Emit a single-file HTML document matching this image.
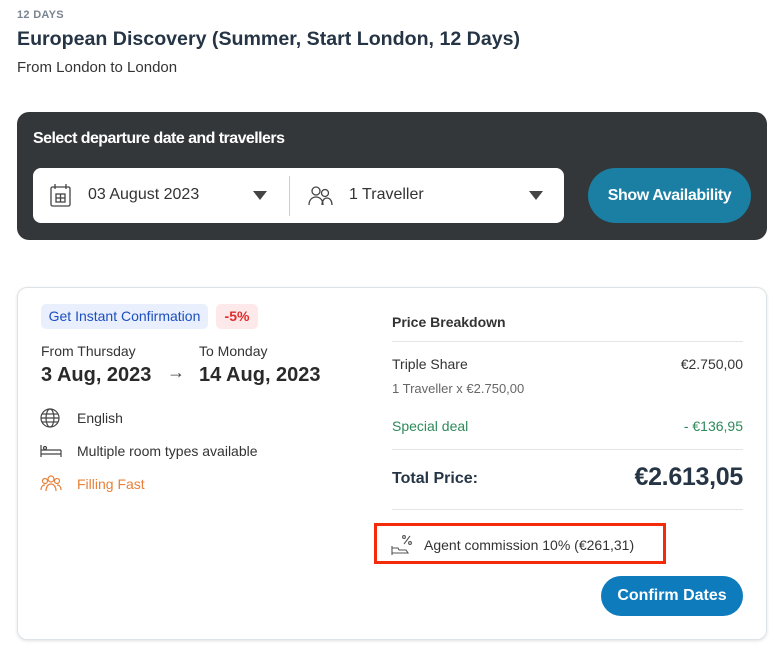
<!DOCTYPE html>
<html><head><meta charset="utf-8"><style>
*{margin:0;padding:0;box-sizing:border-box}
body{width:781px;height:651px;background:#fff;font-family:"Liberation Sans",Arial,sans-serif;position:relative;overflow:hidden;color:#333}
.a{position:absolute;white-space:nowrap}
</style></head><body>
<div class="a" style="left:17px;top:9px;font-size:11px;font-weight:bold;color:#7b8491;letter-spacing:0.3px">12 DAYS</div>
<div class="a" style="left:17px;top:28px;font-size:19.6px;font-weight:bold;color:#263545">European Discovery (Summer, Start London, 12 Days)</div>
<div class="a" style="left:17px;top:59px;font-size:15px;color:#333">From London to London</div>

<div class="a" style="left:17px;top:112px;width:750px;height:128px;background:#333739;border-radius:12px"></div>
<div class="a" style="left:33px;top:130px;font-size:16px;font-weight:bold;color:#fff;letter-spacing:-0.55px">Select departure date and travellers</div>
<div class="a" style="left:33px;top:168px;width:531px;height:55px;background:#fff;border-radius:8px"></div>
<div class="a" style="left:289px;top:176px;width:1px;height:40px;background:#ccc"></div>
<svg class="a" style="left:48px;top:183px" width="26" height="26" viewBox="0 0 26 26" fill="none" stroke="#444" stroke-width="1.3"><rect x="3" y="4" width="19" height="19" rx="1.5"/><line x1="7" y1="1" x2="7" y2="6"/><line x1="18" y1="1" x2="18" y2="6"/><rect x="8" y="11" width="9" height="8"/><line x1="12.5" y1="11" x2="12.5" y2="19"/><line x1="8" y1="15" x2="17" y2="15"/></svg>
<div class="a" style="left:88px;top:186px;font-size:16px;color:#333">03 August 2023</div>
<div class="a" style="left:253px;top:191px;width:0;height:0;border-left:7px solid transparent;border-right:7px solid transparent;border-top:9px solid #444"></div>
<svg class="a" style="left:308px;top:184px" width="26" height="24" viewBox="0 0 26 24" fill="none" stroke="#444" stroke-width="1.3"><circle cx="8" cy="7" r="4"/><path d="M1 21c0-5 3-8 7-8s7 3 7 8"/><circle cx="17" cy="9" r="3.5"/><path d="M14 21c0-4 2-7 5-7s5 3 5 7"/></svg>
<div class="a" style="left:349px;top:186px;font-size:16px;color:#333">1 Traveller</div>
<div class="a" style="left:529px;top:191px;width:0;height:0;border-left:7px solid transparent;border-right:7px solid transparent;border-top:9px solid #444"></div>
<div class="a" style="left:588px;top:168px;width:163px;height:55px;background:#1a7fa3;border-radius:28px;color:#fff;font-size:16px;font-weight:bold;text-align:center;line-height:55px;letter-spacing:-0.4px">Show Availability</div>

<div class="a" style="left:17px;top:287px;width:750px;height:353px;border:1px solid #dde3e6;border-radius:10px;box-shadow:0 1px 3px rgba(0,0,0,0.12)"></div>
<div class="a" style="left:41px;top:304px;width:167px;height:25px;background:#e9effc;border-radius:5px;color:#1c4fbf;font-size:14px;line-height:25px;text-align:center">Get Instant Confirmation</div>
<div class="a" style="left:216px;top:304px;width:42px;height:25px;background:#fde9ea;border-radius:5px;color:#e02c2c;font-size:14px;font-weight:bold;line-height:25px;text-align:center">-5%</div>
<div class="a" style="left:41px;top:343px;font-size:14px;color:#333">From Thursday</div>
<div class="a" style="left:199px;top:343px;font-size:14px;color:#333">To Monday</div>
<div class="a" style="left:41px;top:364px;font-size:20px;font-weight:bold;color:#2a2a2a">3 Aug, 2023</div>
<div class="a" style="left:167px;top:362px;font-size:18px;color:#444">→</div>
<div class="a" style="left:199px;top:364px;font-size:20px;font-weight:bold;color:#2a2a2a">14 Aug, 2023</div>
<svg class="a" style="left:40px;top:408px" width="22" height="22" viewBox="0 0 22 22" fill="none" stroke="#444" stroke-width="1.2"><circle cx="10" cy="10" r="9"/><ellipse cx="10" cy="10" rx="4" ry="9"/><line x1="1" y1="10" x2="19" y2="10"/><line x1="2" y1="6" x2="18" y2="6"/><line x1="2" y1="14" x2="18" y2="14"/></svg>
<div class="a" style="left:77px;top:410px;font-size:14px;color:#333">English</div>
<svg class="a" style="left:40px;top:444px" width="22" height="14" viewBox="0 0 22 14" fill="none" stroke="#444" stroke-width="1.2"><path d="M1 1v12M21 6v7M1 10h20M1 6h20"/><circle cx="5" cy="4" r="1.5"/></svg>
<div class="a" style="left:77px;top:443px;font-size:14px;color:#333">Multiple room types available</div>
<svg class="a" style="left:40px;top:474px" width="22" height="18" viewBox="0 0 22 18" fill="none" stroke="#e8803a" stroke-width="1.2"><circle cx="11" cy="5" r="3"/><circle cx="5" cy="7" r="2.5"/><circle cx="17" cy="7" r="2.5"/><path d="M6 17c0-4 2-7 5-7s5 3 5 7M1 16c0-3 1.5-5 4-5M21 16c0-3-1.5-5-4-5"/></svg>
<div class="a" style="left:77px;top:476px;font-size:14px;color:#e8803a">Filling Fast</div>

<div class="a" style="left:392px;top:314px;font-size:14px;font-weight:bold;color:#333">Price Breakdown</div>
<div class="a" style="left:392px;top:341px;width:351px;height:1px;background:#e2e5e8"></div>
<div class="a" style="left:392px;top:356px;font-size:14px;color:#333">Triple Share</div>
<div class="a" style="left:743px;top:356px;font-size:14px;color:#333;transform:translateX(-100%)">€2.750,00</div>
<div class="a" style="left:392px;top:381px;font-size:13px;color:#666">1 Traveller x €2.750,00</div>
<div class="a" style="left:392px;top:418px;font-size:14px;color:#2d8a5b">Special deal</div>
<div class="a" style="left:743px;top:418px;font-size:14px;color:#2d8a5b;transform:translateX(-100%)">- €136,95</div>
<div class="a" style="left:392px;top:449px;width:351px;height:1px;background:#e2e5e8"></div>
<div class="a" style="left:392px;top:470px;font-size:16px;font-weight:bold;color:#263545">Total Price:</div>
<div class="a" style="left:743px;top:463px;font-size:25px;font-weight:bold;color:#263545;transform:translateX(-100%);letter-spacing:-0.3px">€2.613,05</div>
<div class="a" style="left:392px;top:509px;width:351px;height:1px;background:#e2e5e8"></div>

<div class="a" style="left:374px;top:523px;width:292px;height:41px;border:3px solid #f52a0a"></div>
<svg class="a" style="left:391px;top:534px" width="22" height="22" viewBox="0 0 22 22" fill="none" stroke="#555" stroke-width="1.1"><path d="M1 12v9M1 19h16l-2-3H8l-1-2H1"/><circle cx="13" cy="3" r="1.4"/><circle cx="19" cy="9" r="1.4"/><line x1="19" y1="2" x2="13" y2="10"/></svg>
<div class="a" style="left:424px;top:537px;font-size:14px;color:#333">Agent commission 10% (€261,31)</div>
<div class="a" style="left:601px;top:576px;width:142px;height:40px;background:#0e7bbd;border-radius:20px;color:#fff;font-size:16px;font-weight:bold;text-align:center;line-height:40px">Confirm Dates</div>
</body></html>
